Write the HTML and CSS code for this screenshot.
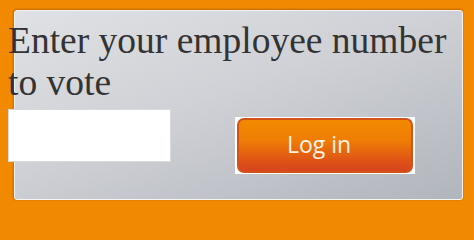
FILE: index.html
```html
<!DOCTYPE html>
<html>
<head>
<meta charset="utf-8">
<link rel="stylesheet" href="styles.css">
</head>
<body>
<div class="panel">
  <div class="content">
    <p class="prompt">Enter your employee number to vote</p>
    <div class="row">
      <input class="field" type="text">
      <div class="btn-wrap"><button class="btn">Log in</button></div>
    </div>
  </div>
</div>
</body>
</html>
```
FILE: styles.css
```css
html, body {
  margin: 0;
  padding: 0;
  background: #f28a00;
  width: 474px;
  height: 207px;
  overflow: hidden;
}
.panel {
  margin: 10px 10px 0 14px;
  width: 447px;
  height: 188px;
  border: 1px solid #f4f4f5;
  border-radius: 3px;
  background: linear-gradient(160deg, #e0e1e4 0%, #cfd1d6 45%, #b1b5bc 100%);
  box-shadow: 0 -1px 2px rgba(120, 60, 0, 0.35), -1px 0 2px rgba(120, 60, 0, 0.3);
}
.content {
  margin-left: -7px;
  padding-top: 9px;
}
.prompt {
  margin: 0;
  width: 450px;
  font-family: "Liberation Serif", "Times New Roman", serif;
  font-size: 37.5px;
  line-height: 42px;
  color: #333333;
}
.row {
  display: flex;
  align-items: flex-start;
  margin-top: 5px;
}
.field {
  box-sizing: border-box;
  width: 163px;
  height: 53px;
  margin: 0;
  border: 1px solid #d8d9dc;
  background: #ffffff;
  outline: none;
}
.btn-wrap {
  margin-left: 64px;
  margin-top: 8px;
  width: 180px;
  height: 57px;
  background: #ffffff;
  padding: 1px 2px;
  box-sizing: border-box;
}
.btn {
  display: block;
  width: 100%;
  height: 100%;
  margin: 0;
  border: 2px solid #d2531a;
  border-radius: 7px;
  background: linear-gradient(180deg, #f38900 0%, #ef7d05 40%, #de5316 80%, #d8431e 100%);
  color: #fff4e6;
  font-family: "Open Sans", "Liberation Sans", Arial, sans-serif;
  font-size: 23px;
  padding: 0 12px 3px 0;
}
```
